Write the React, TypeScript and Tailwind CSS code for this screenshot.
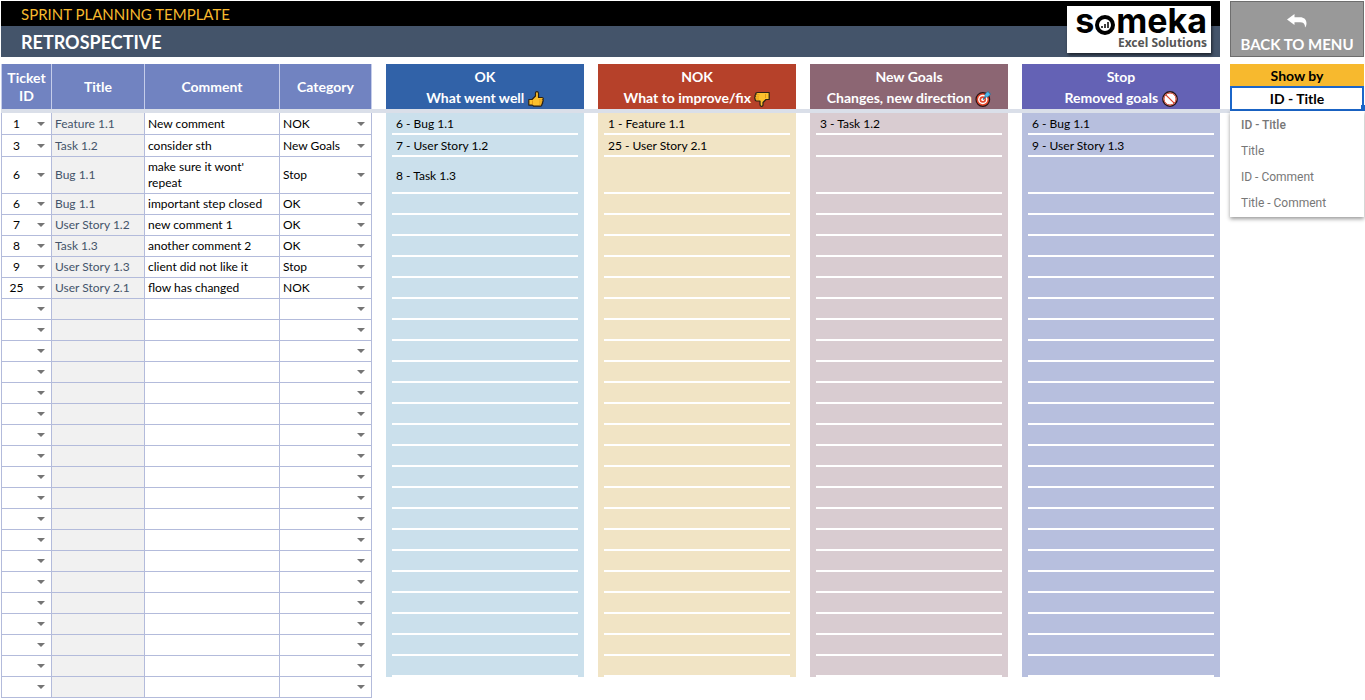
import { useState } from 'react'

type Row = { id: string; title: string; comment: string; category: string; height?: string }

const TICKETS: Row[] = [
  { id: '1', title: 'Feature 1.1', comment: 'New comment', category: 'NOK', height: 'h-[22px]' },
  { id: '3', title: 'Task 1.2', comment: 'consider sth', category: 'New Goals', height: 'h-[22px]' },
  { id: '6', title: 'Bug 1.1', comment: "make sure it wont' repeat", category: 'Stop', height: 'h-[37px]' },
  { id: '6', title: 'Bug 1.1', comment: 'important step closed', category: 'OK' },
  { id: '7', title: 'User Story 1.2', comment: 'new comment 1', category: 'OK' },
  { id: '8', title: 'Task 1.3', comment: 'another comment 2', category: 'OK' },
  { id: '9', title: 'User Story 1.3', comment: 'client did not like it', category: 'Stop' },
  { id: '25', title: 'User Story 2.1', comment: 'flow has changed', category: 'NOK' },
]

const EMPTY: Row = { id: '', title: '', comment: '', category: '' }
const ROWS: Row[] = Array.from({ length: 27 }, (_, i) => TICKETS[i] ?? EMPTY)
const IDS = ['', '1', '3', '6', '7', '8', '9', '25']

function ThumbUp() {
  return (
    <svg viewBox="0 0 16 16" className="inline size-4 align-[-4px]" aria-hidden="true">
      <path d="M.8 8.500H4L7.500 5V2c0-2 3-1.800 3 .5V6.500h3.700c1.300 0 1.400 1.900.5 2.300.8.500.6 1.900-.3 2.200.6.700.2 1.900-.6 2.100.3 1-.3 2-1.300 2H5.500l-1-1H.8z" fill="#fbc02d" stroke="#2b2116" strokeWidth="1.200" strokeLinejoin="round" />
      <path d="M11 8.900h3M11 11h3M11 13.100h2M4.500 9.500v4" stroke="#d9860f" strokeWidth=".7" fill="none" />
    </svg>
  )
}

function ThumbDown() {
  return (
    <svg viewBox="0 0 16 16" className="inline size-4 align-[-4px]" aria-hidden="true">
      <path d="M15.200 1.500H3.500C2 1.500 1.500 2.600 2 3.500 1 3.800.8 5 1.300 5.600.5 6.200.5 7.400 1.200 8c-.3 1.200.4 2 1.400 2H6v3.500c0 2.500 3 2.300 3 .5V11.500L12 8.500h3.200z" fill="#fbc02d" stroke="#2b2116" strokeWidth="1.200" strokeLinejoin="round" />
      <path d="M2.500 3.800h3M2 5.900h3M2 8h3M11.500 3v4" stroke="#d9860f" strokeWidth=".7" fill="none" />
    </svg>
  )
}

function Target() {
  return (
    <svg viewBox="0 0 16 16" className="inline size-4 align-[-4px]" aria-hidden="true">
      <circle cx="7.800" cy="8.500" r="6.800" fill="#e4462b" stroke="#2b1414" strokeWidth="1.200" />
      <circle cx="7.800" cy="8.500" r="4.700" fill="#fff" />
      <circle cx="7.800" cy="8.500" r="3.300" fill="#e4462b" />
      <circle cx="7.800" cy="8.500" r="1.600" fill="#fff" />
      <path d="M8 8.500 12 4" stroke="#2d6f9c" strokeWidth="1.200" />
      <path d="M10 6V3L13.300.3l.7 1.800 1.800.7L13 6z" fill="#4db8ea" stroke="#1d5f86" strokeWidth=".5" />
    </svg>
  )
}

function Prohibited() {
  return (
    <svg viewBox="0 0 16 16" className="inline size-4 align-[-4px]" aria-hidden="true">
      <circle cx="8" cy="8" r="7.200" fill="#fff" stroke="#2b1414" strokeWidth="1.400" />
      <circle cx="8" cy="8" r="6" fill="none" stroke="#d8412c" strokeWidth="1" />
      <path d="m3.800 3.800 8.400 8.400" stroke="#d8412c" strokeWidth="1.200" />
    </svg>
  )
}

const LANES = [
  { key: 'OK', text: 'What went well', icon: ThumbUp, head: 'bg-[#3162a8]', body: 'bg-[#cbe0ec]' },
  { key: 'NOK', text: 'What to improve/fix', icon: ThumbDown, head: 'bg-[#b6412a]', body: 'bg-[#f1e4c5]' },
  { key: 'New Goals', text: 'Changes, new direction', icon: Target, head: 'bg-[#8c6673]', body: 'bg-[#d9ccd1]' },
  { key: 'Stop', text: 'Removed goals', icon: Prohibited, head: 'bg-[#6462b5]', body: 'bg-[#b7bfde]' },
]

const SHOW_BY = ['ID - Title', 'Title', 'ID - Comment', 'Title - Comment']

function format(row: Row, mode: string) {
  if (mode === 'Title') return row.title
  if (mode === 'ID - Comment') return `${row.id} - ${row.comment}`
  if (mode === 'Title - Comment') return `${row.title} - ${row.comment}`
  return `${row.id} - ${row.title}`
}

function Picker({ label, value, options, className }: { label: string; value: string; options: string[]; className: string }) {
  return (
    <div className="flex items-center pr-1.5">
      <select aria-label={label} defaultValue={value} className={`min-w-0 flex-1 appearance-none bg-transparent outline-none ${className}`}>
        {options.map(o => <option key={o} value={o}>{o}</option>)}
      </select>
      <svg viewBox="0 0 8 4" className="h-1 w-2 shrink-0" aria-hidden="true"><path d="M0 0h8L4 4z" fill="#757575" /></svg>
    </div>
  )
}

function Logo() {
  return (
    <div className="mr-[9px] flex h-[47px] w-36 flex-col items-end justify-center bg-white px-1 text-black shadow-[1px_2px_3px_rgba(0,0,0,0.6)]">
      <div className="flex items-center font-[Inter,sans-serif] text-[34px] leading-[26px] font-bold">
        <span>s</span>
        <svg viewBox="0 0 20 20" className="mx-px mt-2 size-5" role="img" aria-label="o">
          <circle cx="10" cy="10" r="8" fill="#fff" stroke="#000" strokeWidth="4" />
          <path d="M7 13v-2M10 13V9M13 13V7" stroke="#000" strokeWidth="1.500" />
        </svg>
        <span>meka</span>
      </div>
      <div className="font-['Noto_Sans',sans-serif] text-xs leading-4 font-bold text-[#555]">Excel Solutions</div>
    </div>
  )
}

function Sheet({ mode }: { mode: string }) {
  const th = 'border-r border-[#c5cdea] bg-[#7183c1] p-0'
  const td = 'border-r border-b border-[#b3bbdb] p-0'
  return (
    <table className="w-full table-fixed border-separate border-spacing-0 text-xs leading-4">
      <colgroup>
        <col className="w-[51px]" />
        <col className="w-[93px]" />
        <col className="w-[135px]" />
        <col className="w-[92px]" />
        {LANES.map(l => [<col key={`${l.key}-gap`} className="w-[14px]" />, <col key={l.key} />])}
        <col className="w-2.5" />
      </colgroup>
      <thead className="text-sm leading-[18px] font-bold text-white">
        <tr className="h-[45px]">
          <th className={`${th} border-l`}>Ticket<br />ID</th>
          <th className={th}>Title</th>
          <th className={th}>Comment</th>
          <th className={th}>Category</th>
          {LANES.map(({ key, text, icon: Icon, head }) => [
            <td key={`${key}-gap`} className="p-0" />,
            <th key={key} className={`p-0 leading-[21px] ${head}`}>
              <div>{key}</div>
              <div className="h-[21px]">{text} <Icon /></div>
            </th>,
          ])}
          <td className="p-0" />
        </tr>
        {/* freeze line */}
        <tr className="h-1"><td colSpan={13} className="bg-[#dadfe9] p-0" /></tr>
      </thead>
      <tbody>
        {ROWS.map((row, i) => {
          const height = row.height ?? 'h-[21px]'
          const last = i === ROWS.length - 1
          return (
            <tr key={i} className={height}>
              <td className={`${td} border-l`}>
                <Picker label={`Ticket ID, row ${i + 1}`} value={row.id} options={IDS} className="pr-1.5 text-center" />
              </td>
              <td className={`${td} bg-[#f1f1f1] pl-[3px] text-[#44546a]`}>{row.title}</td>
              <td className={`${td} pl-[3px]`}>{row.comment}</td>
              <td className={td}>
                <Picker label={`Category, row ${i + 1}`} value={row.category} options={['', ...LANES.map(l => l.key)]} className="pl-[3px]" />
              </td>
              {LANES.map(({ key, body }) => {
                const item = TICKETS.filter(t => t.category === key)[i]
                return [
                  <td key={`${key}-gap`} className="p-0" />,
                  <td key={key} className={`px-1.5 py-0 ${last ? '' : body}`}>
                    <div className={`flex items-center border-b-2 border-white pt-0.5 pl-1 ${height}`}>{item && format(item, mode)}</div>
                  </td>,
                ]
              })}
              <td className="p-0" />
            </tr>
          )
        })}
      </tbody>
    </table>
  )
}

export default function App() {
  const [mode, setMode] = useState('ID - Title')
  const [open, setOpen] = useState(true)

  return (
    <div className="flex bg-white p-px font-[Lato,'Noto_Sans',sans-serif] text-black">
      <main className="min-w-0 flex-1">
        <header className="mr-2.5 flex items-center justify-between bg-linear-to-b from-black from-[25px] to-[#44546a] to-[25px]">
          <div className="pl-5">
            <div className="h-[25px] text-[15px] leading-[27px] text-[#f7b92e]">SPRINT PLANNING TEMPLATE</div>
            <h1 className="h-[31px] text-lg leading-8 font-bold text-white">RETROSPECTIVE</h1>
          </div>
          <Logo />
        </header>
        <div className="mt-[7px]"><Sheet mode={mode} /></div>
      </main>

      <aside className="w-[134px] shrink-0">
        <button type="button" className="flex h-14 w-full flex-col items-center justify-end border border-[#6e6e6e] bg-[#999] text-[15px] leading-6 font-bold whitespace-nowrap text-white">
          <svg viewBox="0 0 20 14" className="h-[14px] w-5" aria-hidden="true">
            <path d="M0 5.500 7.500 0v3.200H13c4 0 6.500 2.300 6.500 6 0 1.800-.6 3.300-1.500 4.300.2-3.500-1.500-5.300-5-5.300H7.500V11z" fill="#fff" />
          </svg>
          <span className="mt-1">BACK TO MENU</span>
        </button>
        <div className="relative mt-[7px] text-center font-bold">
          <div id="show-by" className="h-[22px] bg-[#f7b92e] text-sm leading-6">Show by</div>
          <button type="button" aria-haspopup="listbox" aria-expanded={open} aria-labelledby="show-by"
            onClick={() => setOpen(!open)}
            className="block h-[25px] w-full border-2 border-[#1b66c9] bg-white text-sm leading-5 font-bold">
            {mode}
          </button>
          {/* fill handle of the selected cell */}
          <span className="absolute -right-px bottom-0 h-1.5 w-1 bg-[#1b66c9]" />
          {open && (
            <ul role="listbox" aria-labelledby="show-by"
              className="absolute inset-x-0 top-full z-10 bg-white py-px text-left font-[Roboto,sans-serif] text-xs font-normal text-[#777] shadow-[0_2px_4px_rgba(0,0,0,0.4)]">
              {SHOW_BY.map(o => (
                <li key={o} role="option" aria-selected={o === mode}>
                  <button type="button" onClick={() => { setMode(o); setOpen(false) }}
                    className={`h-[26px] w-full pl-[11px] text-left ${o === mode ? 'font-medium' : ''}`}>{o}</button>
                </li>
              ))}
            </ul>
          )}
        </div>
      </aside>
    </div>
  )
}
